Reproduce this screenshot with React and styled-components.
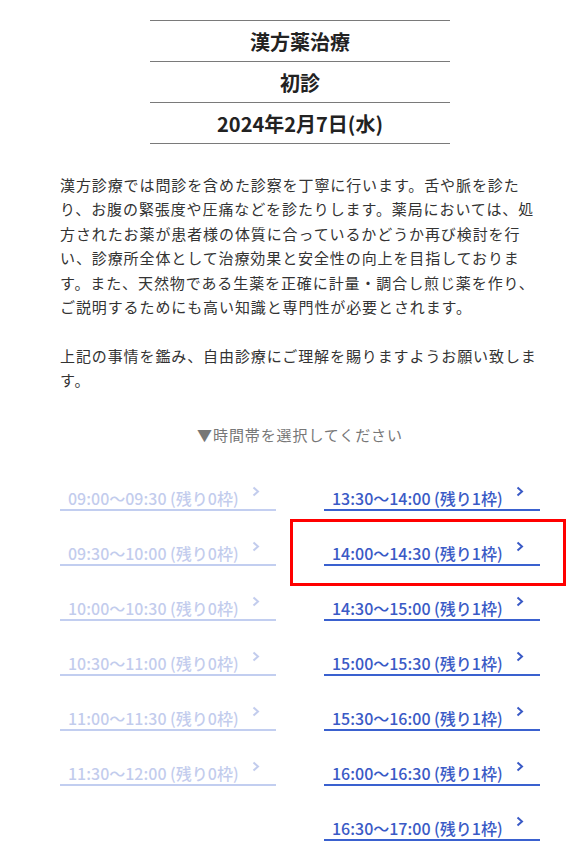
import React from "react";
import styled, { createGlobalStyle } from "styled-components";

const GlobalStyle = createGlobalStyle`
  html, body {
    margin: 0;
    padding: 0;
    background: #ffffff;
  }
  body {
    font-family: "Noto Sans CJK JP", "Noto Sans", sans-serif;
    color: #333333;
  }
`;

const Page = styled.main`
  width: 480px;
  margin-left: 60px;
  padding-top: 20px;
  padding-bottom: 40px;
`;

const Header = styled.header`
  width: 300px;
  margin: 0 auto;
  border-top: 1px solid #7a7a7a;
`;

const HeaderRow = styled.div`
  height: 40px;
  display: flex;
  align-items: center;
  justify-content: center;
  border-bottom: 1px solid #7a7a7a;
  font-size: 20px;
  font-weight: 700;
  color: #222222;
`;

const Body = styled.section`
  margin-top: 29px;
  font-size: 15px;
  line-height: 24.4px;
  letter-spacing: 0.06em;
  color: #333333;
`;

const Paragraph = styled.p`
  margin: 0 0 24.4px;
  &:last-child {
    margin-bottom: 0;
  }
`;

const SelectLabel = styled.div`
  margin-top: 30px;
  text-align: center;
  font-size: 15px;
  line-height: 24.4px;
  letter-spacing: 0.06em;
  color: #777777;
`;

const SlotGrid = styled.div`
  margin-top: 40px;
  display: grid;
  grid-template-columns: 1fr 1fr;
  column-gap: 48px;
  align-items: start;
`;

const SlotColumn = styled.ul`
  list-style: none;
  margin: 0;
  padding: 0;
  display: flex;
  flex-direction: column;
  gap: 31px;
`;

const SlotItem = styled.li`
  position: relative;
`;

const SlotLink = styled.a`
  position: relative;
  display: block;
  padding-left: 8px;
  font-size: 16px;
  font-weight: 500;
  line-height: 22px;
  color: #3a5ac6;
  text-decoration: none;
  border-bottom: 2px solid #3a61cf;
  opacity: ${(p) => (p.$disabled ? 0.3 : 1)};
  cursor: ${(p) => (p.$disabled ? "default" : "pointer")};
`;

const Chevron = styled.svg`
  position: absolute;
  right: 16px;
  top: -1px;
`;

const Highlight = styled.div`
  position: absolute;
  top: -23px;
  left: -34px;
  right: -26px;
  bottom: -20px;
  border: 3px solid #ff0000;
  pointer-events: none;
`;

const morning = [
  "09:00〜09:30",
  "09:30〜10:00",
  "10:00〜10:30",
  "10:30〜11:00",
  "11:00〜11:30",
  "11:30〜12:00",
];

const afternoon = [
  "13:30〜14:00",
  "14:00〜14:30",
  "14:30〜15:00",
  "15:00〜15:30",
  "15:30〜16:00",
  "16:00〜16:30",
  "16:30〜17:00",
];

function Slot({ time, left, disabled, highlighted }) {
  return (
    <SlotItem>
      <SlotLink $disabled={disabled} href="#">
        {time} (残り{left}枠)
        <Chevron width="8" height="12" viewBox="0 0 8 12" aria-hidden="true">
          <polyline
            points="1.5,1.5 6,5.5 1.5,9.5"
            fill="none"
            stroke="currentColor"
            strokeWidth="2"
          />
        </Chevron>
      </SlotLink>
      {highlighted && <Highlight />}
    </SlotItem>
  );
}

export default function App() {
  return (
    <>
      <GlobalStyle />
      <Page>
        <Header>
          <HeaderRow>漢方薬治療</HeaderRow>
          <HeaderRow>初診</HeaderRow>
          <HeaderRow>2024年2月7日(水)</HeaderRow>
        </Header>
        <Body>
          <Paragraph>
            漢方診療では問診を含めた診察を丁寧に行います。舌や脈を診たり、お腹の緊張度や圧痛などを診たりします。薬局においては、処方されたお薬が患者様の体質に合っているかどうか再び検討を行い、診療所全体として治療効果と安全性の向上を目指しております。また、天然物である生薬を正確に計量・調合し煎じ薬を作り、ご説明するためにも高い知識と専門性が必要とされます。
          </Paragraph>
          <Paragraph>
            上記の事情を鑑み、自由診療にご理解を賜りますようお願い致します。
          </Paragraph>
        </Body>
        <SelectLabel>▼時間帯を選択してください</SelectLabel>
        <SlotGrid>
          <SlotColumn>
            {morning.map((t) => (
              <Slot key={t} time={t} left={0} disabled />
            ))}
          </SlotColumn>
          <SlotColumn>
            {afternoon.map((t, i) => (
              <Slot key={t} time={t} left={1} highlighted={i === 1} />
            ))}
          </SlotColumn>
        </SlotGrid>
      </Page>
    </>
  );
}
